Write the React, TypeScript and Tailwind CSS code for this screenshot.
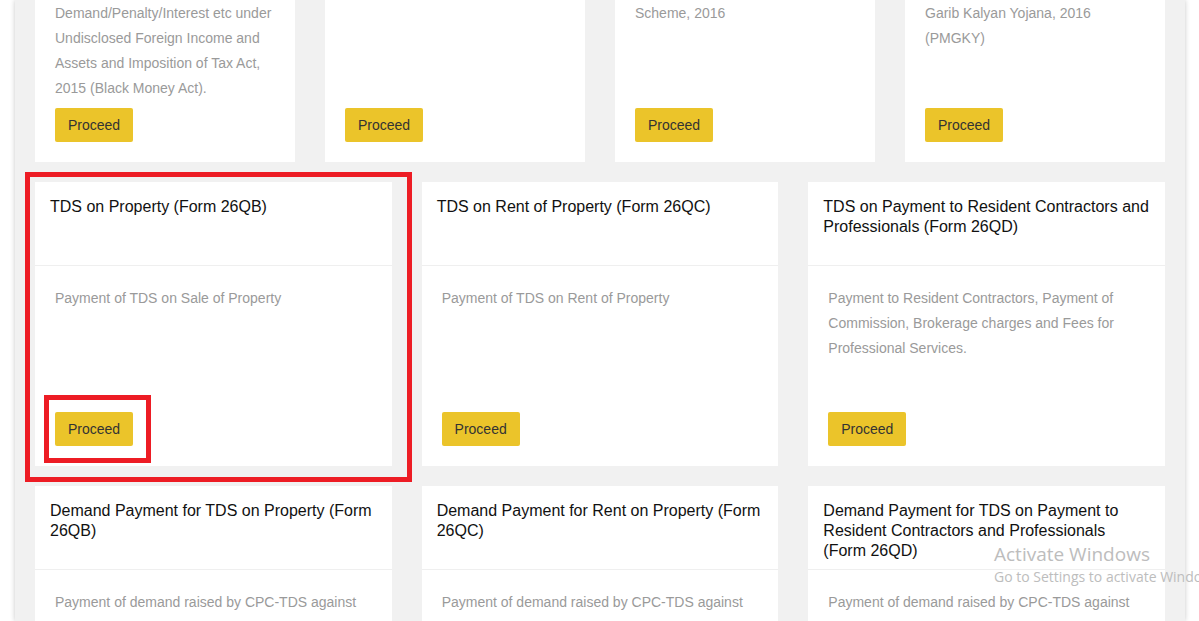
import React from "react";

const font = { fontFamily: '"Liberation Sans", Arial, sans-serif' };

function ProceedBtn() {
  return (
    <button className="mt-auto w-[78px] h-[34px] shrink-0 rounded-[2px] bg-[#ebc42a] text-[14px] text-[#333] leading-[34px] text-center">
      Proceed
    </button>
  );
}

function TopCard({ lines }: { lines: string[] }) {
  return (
    <div className="h-[162px] bg-white flex flex-col px-5 pb-5 pt-[1px]">
      <div className="text-[14px] leading-[25px] text-[#9a9a9a]">
        {lines.map((l, i) => (
          <div key={i}>{l}</div>
        ))}
      </div>
      <ProceedBtn />
    </div>
  );
}

function Card({
  title,
  desc,
  button = true,
}: {
  title: React.ReactNode;
  desc: React.ReactNode;
  button?: boolean;
}) {
  return (
    <div className="h-[284px] bg-white flex flex-col">
      <div className="h-[84px] shrink-0 border-b border-[#efefef] px-[15px] pt-[15px] text-[16px] leading-[20px] text-[#111]">
        {title}
      </div>
      <div className="flex-1 flex flex-col p-5">
        <div className="text-[14px] leading-[25px] text-[#9a9a9a]">{desc}</div>
        {button && <ProceedBtn />}
      </div>
    </div>
  );
}

export default function App() {
  return (
    <div className="relative h-[621px] w-[1199px] overflow-hidden bg-white" style={font}>
      <div className="relative ml-[15px] w-[1170px] h-full bg-[#f1f1f1] shadow-[0_0_5px_rgba(0,0,0,0.22)] px-5">
        <div className="grid grid-cols-4 gap-[30px]">
          <TopCard
            lines={[
              "Demand/Penalty/Interest etc under",
              "Undisclosed Foreign Income and",
              "Assets and Imposition of Tax Act,",
              "2015 (Black Money Act).",
            ]}
          />
          <TopCard lines={[]} />
          <TopCard lines={["Scheme, 2016"]} />
          <TopCard lines={["Garib Kalyan Yojana, 2016", "(PMGKY)"]} />
        </div>

        <div className="grid grid-cols-3 gap-[30px] mt-5">
          <Card title="TDS on Property (Form 26QB)" desc="Payment of TDS on Sale of Property" />
          <Card title="TDS on Rent of Property (Form 26QC)" desc="Payment of TDS on Rent of Property" />
          <Card
            title={
              <>
                TDS on Payment to Resident Contractors and
                <br />
                Professionals (Form 26QD)
              </>
            }
            desc={
              <>
                Payment to Resident Contractors, Payment of
                <br />
                Commission, Brokerage charges and Fees for
                <br />
                Professional Services.
              </>
            }
          />
        </div>

        <div className="grid grid-cols-3 gap-[30px] mt-5">
          <Card
            button={false}
            title={
              <>
                Demand Payment for TDS on Property (Form
                <br />
                26QB)
              </>
            }
            desc="Payment of demand raised by CPC-TDS against"
          />
          <Card
            button={false}
            title={
              <>
                Demand Payment for Rent on Property (Form
                <br />
                26QC)
              </>
            }
            desc="Payment of demand raised by CPC-TDS against"
          />
          <Card
            button={false}
            title={
              <>
                Demand Payment for TDS on Payment to
                <br />
                Resident Contractors and Professionals
                <br />
                (Form 26QD)
              </>
            }
            desc="Payment of demand raised by CPC-TDS against"
          />
        </div>

        {/* red annotation boxes */}
        <div className="absolute left-[10px] top-[172px] w-[387px] h-[310px] border-[5px] border-[#ed1c24] pointer-events-none" />
        <div className="absolute left-[29px] top-[395px] w-[107px] h-[68px] border-[5px] border-[#ed1c24] pointer-events-none" />
      </div>

      {/* Windows activation watermark */}
      <div
        className="absolute left-[994px] top-[541px] whitespace-nowrap text-[#bdbdbd] pointer-events-none"
        style={{ fontFamily: '"Open Sans", "Noto Sans", sans-serif' }}
      >
        <div className="text-[19px] leading-[26px]">Activate Windows</div>
        <div className="text-[14px] leading-[20px]">Go to Settings to activate Windows.</div>
      </div>
    </div>
  );
}
